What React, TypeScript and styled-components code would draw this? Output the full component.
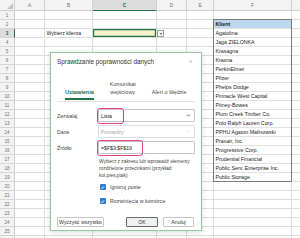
import React from "react";
import styled, { createGlobalStyle } from "styled-components";
import { X, ChevronDown } from "lucide-react";

const GlobalStyle = createGlobalStyle`
  html, body {
    margin: 0;
    padding: 0;
    background: #fff;
  }
  body {
    overflow: hidden;
    font-family: "Liberation Sans", Arial, sans-serif;
  }
  * {
    box-sizing: border-box;
  }
`;

const COLUMNS = ["A", "B", "C", "D", "E", "F", "G"];
const COL_WIDTHS = [15, 30, 48, 64, 30, 27, 78, 40];
const ROW_COUNT = 25;
const ACTIVE_COL = "C";
const ACTIVE_ROW = 3;

const clients = [
  "Agatolina",
  "Jaga ZIELONKA",
  "Krasagna",
  "Krasna",
  "PerkinElmer",
  "Pfizer",
  "Phelps Dodge",
  "Pinnacle West Capital",
  "Pitney-Bowes",
  "Plum Creek Timber Co.",
  "Polo Ralph Lauren Corp.",
  "PPHU Agaton Malinowski",
  "Praxair, Inc.",
  "Progressive Corp.",
  "Prudential Financial",
  "Public Serv. Enterprise Inc.",
  "Public Storage",
];

const tabs = [
  { label: "Ustawienia", active: true },
  { label: "Komunikat\nwejściowy", active: false },
  { label: "Alert o błędzie", active: false },
];

function App() {
  // ostatni wiersz to tylko skrawek u dołu okna, bez numeru
  const rows = Array.from({ length: ROW_COUNT + 1 }, (_, i) => i + 1);

  return (
    <>
      <GlobalStyle />
      <Sheet>
        <SheetGrid>
          <Corner />
          {COLUMNS.map((col) => (
            <ColHeader key={col} $active={col === ACTIVE_COL}>
              {col === "G" ? null : col}
            </ColHeader>
          ))}

          <ClientTable>
            <ClientRow $head>Klient</ClientRow>
            {clients.map((name) => (
              <ClientRow key={name}>{name}</ClientRow>
            ))}
          </ClientTable>

          {rows.map((row) => (
            <React.Fragment key={row}>
              <RowHeader $active={row === ACTIVE_ROW}>
                {row <= ROW_COUNT ? row : null}
              </RowHeader>
              {COLUMNS.map((col) => {
                // komórki tabeli F2:F19 rysuje ClientTable
                if (col === "F" && row >= 2 && row <= 19) return null;
                if (col === ACTIVE_COL && row === ACTIVE_ROW) {
                  return (
                    <SelectedCell key={col}>
                      <DropButton />
                    </SelectedCell>
                  );
                }
                return (
                  <Cell key={col}>
                    {col === "B" && row === 3 ? "Wybierz klienta" : null}
                  </Cell>
                );
              })}
            </React.Fragment>
          ))}
        </SheetGrid>

        <Dialog>
          <TitleBar>
            <Title>Sprawdzanie poprawności danych</Title>
            <X size={5} strokeWidth={1.6} color="#666" />
          </TitleBar>

          <TabBar>
            {tabs.map((tab) => (
              <Tab key={tab.label} $active={tab.active}>
                <TabLabel>{tab.label}</TabLabel>
                <TabIndicator $active={tab.active} />
              </Tab>
            ))}
          </TabBar>

          <Form>
            <FieldRow>
              <FieldLabel>Zezwalaj</FieldLabel>
              <SelectBox>
                <span>Lista</span>
                <ChevronDown size={5} strokeWidth={3.2} color="#333" />
                <Highlight $w={27} />
              </SelectBox>
            </FieldRow>
            <FieldRow>
              <FieldLabel>Dane</FieldLabel>
              <SelectBox $disabled>
                <span>Pomiędzy</span>
                <ChevronDown size={5} strokeWidth={2} color="#aaa" />
              </SelectBox>
            </FieldRow>
            <FieldRow>
              <FieldLabel>Źródło</FieldLabel>
              <SelectBox>
                <span>=$F$3:$F$19</span>
                <Highlight $w={46} />
              </SelectBox>
            </FieldRow>
          </Form>

          <HelpText>
            Wybierz z zakresu lub wprowadź elementy
            <br />
            rozdzielone przecinkami (przykład:
            <br />
            kot,pies,ptak)
          </HelpText>

          <CheckRow $gap={5}>
            <CheckBox>
              <svg width="5" height="5" viewBox="0 0 10 10">
                <polyline points="2,5.2 4.2,7.4 8.2,2.8" fill="none" stroke="#fff" strokeWidth="1.8" />
              </svg>
            </CheckBox>
            Ignoruj puste
          </CheckRow>
          <CheckRow $gap={7}>
            <CheckBox>
              <svg width="5" height="5" viewBox="0 0 10 10">
                <polyline points="2,5.2 4.2,7.4 8.2,2.8" fill="none" stroke="#fff" strokeWidth="1.8" />
              </svg>
            </CheckBox>
            Rozwinięcia w komórce
          </CheckRow>

          <ButtonRow>
            <Button $w={47}>Wyczyść wszystko</Button>
            <ButtonGroup>
              <Button $w={32} $primary>
                OK
              </Button>
              <Button $w={31}>Anuluj</Button>
            </ButtonGroup>
          </ButtonRow>
        </Dialog>
      </Sheet>
    </>
  );
}

const Sheet = styled.div`
  position: relative;
  width: 300px;
  height: 238px;
  overflow: hidden;
  background: #fff;
`;

const SheetGrid = styled.div`
  display: grid;
  grid-template-columns: ${COL_WIDTHS.map((w) => `${w}px`).join(" ")};
  grid-template-rows: 11px repeat(${ROW_COUNT + 1}, 9px);
  font-family: "Liberation Sans", Arial, sans-serif;
`;

const Corner = styled.div`
  position: relative;
  background: #f3f3f3;
  border-right: 1px solid #cfcfcf;
  border-bottom: 1px solid #cfcfcf;
  &::after {
    content: "";
    position: absolute;
    right: 1px;
    bottom: 1px;
    border-left: 6px solid transparent;
    border-bottom: 6px solid #c2c2c2;
  }
`;

const ColHeader = styled.div<{ $active?: boolean }>`
  display: flex;
  align-items: center;
  justify-content: center;
  background: ${({ $active }) => ($active ? "#dcdcdc" : "#f3f3f3")};
  border-right: 1px solid #d2d2d2;
  border-bottom: ${({ $active }) => ($active ? "1.5px solid #217346" : "1px solid #cfcfcf")};
  color: ${({ $active }) => ($active ? "#1d6b3f" : "#707070")};
  font-weight: ${({ $active }) => ($active ? 700 : 400)};
  font-size: 4.8px;
`;

const RowHeader = styled.div<{ $active?: boolean }>`
  display: flex;
  align-items: center;
  justify-content: center;
  background: ${({ $active }) => ($active ? "#dcdcdc" : "#f3f3f3")};
  border-right: ${({ $active }) => ($active ? "1.5px solid #217346" : "1px solid #cfcfcf")};
  border-bottom: 1px solid #d6d6d6;
  color: ${({ $active }) => ($active ? "#1d6b3f" : "#707070")};
  font-weight: ${({ $active }) => ($active ? 700 : 400)};
  font-size: 4.6px;
`;

const Cell = styled.div`
  position: relative;
  border-right: 1px solid #dedede;
  border-bottom: 1px solid #dedede;
  padding-left: 1.5px;
  font-size: 5.1px;
  line-height: 8px;
  color: #222;
  white-space: nowrap;
`;

const SelectedCell = styled(Cell)`
  background: #fff2cc;
  box-shadow: inset 0 0 0 1.2px #217346;
`;

const DropButton = styled.div`
  position: absolute;
  left: calc(100% + 1px);
  top: 1px;
  width: 7px;
  height: 7px;
  border: 1px solid #a0a0a0;
  background: #fff;
  display: flex;
  align-items: center;
  justify-content: center;
  z-index: 2;
  &::after {
    content: "";
    border-left: 1.5px solid transparent;
    border-right: 1.5px solid transparent;
    border-top: 2px solid #333;
  }
`;

const ClientTable = styled.div`
  grid-column: 7;
  grid-row: 3 / 21;
  margin: -1px 0 0 -1px;
  border: 1px solid #7b7b7b;
  background: #fff;
  display: flex;
  flex-direction: column;
  z-index: 1;
`;

const ClientRow = styled.div<{ $head?: boolean }>`
  flex: 1;
  display: flex;
  align-items: center;
  padding-left: 1.5px;
  border-bottom: 1px solid #e2e2e2;
  background: ${({ $head }) => ($head ? "#bdd7ee" : "transparent")};
  font-weight: ${({ $head }) => ($head ? 700 : 400)};
  font-size: 5.3px;
  color: #222;
  white-space: nowrap;
  &:last-child {
    border-bottom: 0;
  }
`;

const Dialog = styled.div`
  position: absolute;
  left: 50px;
  top: 52px;
  width: 152px;
  height: 179px;
  padding: 0 6px;
  display: flex;
  flex-direction: column;
  background: #fff;
  border: 1px solid #93c9a4;
  box-shadow: 0 1px 5px rgba(0, 0, 0, 0.16);
  color: #333;
  font-family: "Liberation Sans", Arial, sans-serif;
  z-index: 5;
`;

const TitleBar = styled.div`
  height: 17px;
  display: flex;
  align-items: center;
  justify-content: space-between;
  padding-right: 2px;
`;

const Title = styled.div`
  font-size: 6.4px;
  color: #323130;
  white-space: nowrap;
`;

const TabBar = styled.div`
  height: 32px;
  display: flex;
  align-items: flex-end;
  border-bottom: 1px solid #e1e1e1;
`;

const Tab = styled.div<{ $active?: boolean }>`
  display: flex;
  flex-direction: column;
  align-items: stretch;
  padding: 0 8px;
  color: ${({ $active }) => ($active ? "#1f6b3f" : "#4a4a4a")};
  font-weight: ${({ $active }) => ($active ? 700 : 400)};
`;

const TabLabel = styled.div`
  font-size: 5.5px;
  line-height: 8px;
  text-align: center;
  white-space: pre;
`;

const TabIndicator = styled.div<{ $active?: boolean }>`
  height: 2px;
  margin: 2px 0 1px;
  background: ${({ $active }) => ($active ? "#217346" : "transparent")};
`;

const Form = styled.div`
  margin-top: 7px;
  display: flex;
  flex-direction: column;
  gap: 3px;
`;

const FieldRow = styled.div`
  display: grid;
  grid-template-columns: 41px 1fr;
  align-items: center;
  height: 13px;
`;

const FieldLabel = styled.div`
  font-size: 5.2px;
  color: #444;
`;

const SelectBox = styled.div<{ $disabled?: boolean }>`
  position: relative;
  height: 13px;
  display: flex;
  align-items: center;
  justify-content: space-between;
  padding: 0 3px 0 2px;
  border: 1px solid ${({ $disabled }) => ($disabled ? "#dedede" : "#c6c6c6")};
  border-radius: 1px;
  font-size: 5.2px;
  color: ${({ $disabled }) => ($disabled ? "#a8a8a8" : "#222")};
`;

const Highlight = styled.div<{ $w: number }>`
  position: absolute;
  left: -2px;
  top: -2.5px;
  bottom: -2.5px;
  width: ${({ $w }) => $w}px;
  border: 1.5px solid #e6437c;
  border-radius: 3px;
  pointer-events: none;
`;

const HelpText = styled.div`
  margin: 3.5px 0 0 42px;
  font-size: 4.8px;
  line-height: 7px;
  color: #444;
  white-space: nowrap;
`;

const CheckRow = styled.div<{ $gap: number }>`
  margin: ${({ $gap }) => $gap}px 0 0 43px;
  height: 7px;
  display: flex;
  align-items: center;
  gap: 4.5px;
  font-size: 5.3px;
  color: #444;
  white-space: nowrap;
`;

const CheckBox = styled.span`
  width: 5.5px;
  height: 5.5px;
  border-radius: 1px;
  background: #2b7cd3;
  display: inline-flex;
  align-items: center;
  justify-content: center;
`;

const ButtonRow = styled.div`
  margin: auto 1px 3px 0;
  display: flex;
  justify-content: space-between;
  align-items: center;
`;

const ButtonGroup = styled.div`
  display: flex;
  gap: 5px;
`;

const Button = styled.button<{ $w: number; $primary?: boolean }>`
  width: ${({ $w }) => $w}px;
  height: 10.5px;
  padding: 0;
  border: 1px solid ${({ $primary }) => ($primary ? "#6a6a6a" : "#c6c6c6")};
  border-radius: 1px;
  background: ${({ $primary }) => ($primary ? "#eef1ee" : "#fff")};
  color: #333;
  font-family: inherit;
  font-size: 5.2px;
  white-space: nowrap;
`;

export default App;
